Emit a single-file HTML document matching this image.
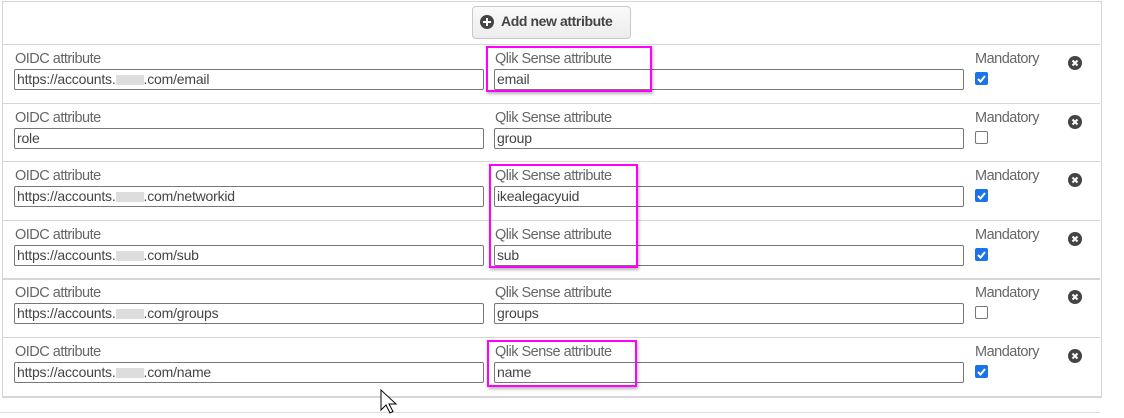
<html><head><style>
body{margin:0;width:1124px;height:418px;background:#fff;position:relative;overflow:hidden;font-family:"Liberation Sans",sans-serif;}
.a{position:absolute}
.lbl{position:absolute;font-size:14.5px;color:#666;letter-spacing:-0.5px}
.inp{position:absolute;height:19px;border:1px solid #777;border-radius:2px;font-size:14px;color:#444;line-height:19px;padding-left:2px;box-sizing:content-box;letter-spacing:-0.2px}
.blur{display:inline-block;width:28px;height:10px;background:#ddd;vertical-align:middle}
.cb{position:absolute;width:11px;height:11px;border:1px solid #777;border-radius:2px}
.cb.on{background:#1a73e8;border-color:#1a73e8}
.x{position:absolute;width:14px;height:14px;border-radius:50%;background:#444}
.mg{position:absolute;border:2px solid #f0f;box-shadow:1px 2px 3px rgba(0,0,0,.3)}
</style></head><body>
<div class="a" style="left:2px;top:1px;width:1098px;height:394px;border:1px solid #d6d6d6;border-bottom:2px solid #d6d6d6"></div>
<div class="a" style="left:0;top:412px;width:1100px;height:1px;background:#ddd"></div>
<div class="a" style="left:472px;top:6px;width:157px;height:31px;border:1px solid #c8c8c8;border-radius:4px;background:linear-gradient(#fafafa,#ececec)">
<div class="a" style="left:7px;top:8px;width:14px;height:14px;border-radius:50%;background:#444"><div class="a" style="left:3px;top:6px;width:8px;height:2px;background:#fff"></div><div class="a" style="left:6px;top:3px;width:2px;height:8px;background:#fff"></div></div>
<div class="a" style="left:28px;top:6px;font-size:14px;font-weight:bold;color:#444;letter-spacing:-0.4px">Add new attribute</div></div>
<div id="rows"></div>
<script>
var tops=[44,103,161,220,278,337];
var o=["https://accounts.<span class=blur></span>.com/email","role","https://accounts.<span class=blur></span>.com/networkid","https://accounts.<span class=blur></span>.com/sub","https://accounts.<span class=blur></span>.com/groups","https://accounts.<span class=blur></span>.com/name"];
var q=["email","group","ikealegacyuid","sub","groups","name"];
var c=[1,0,1,1,0,1];
var h="";
tops.forEach(function(t,i){
h+='<div class="a" style="left:3px;top:'+t+'px;width:1097px;height:'+(i==4?2:1)+'px;background:#d6d6d6"></div>';
h+='<div class="lbl" style="left:15px;top:'+(t+7)+'px">OIDC attribute</div>';
h+='<div class="inp" style="left:14px;top:'+(t+25)+'px;width:466px">'+o[i]+'</div>';
h+='<div class="lbl" style="left:495px;top:'+(t+7)+'px">Qlik Sense attribute</div>';
h+='<div class="inp" style="left:494px;top:'+(t+25)+'px;width:466px">'+q[i]+'</div>';
h+='<div class="lbl" style="left:975px;top:'+(t+7)+'px">Mandatory</div>';
h+='<div class="cb'+(c[i]?' on':'')+'" style="left:975px;top:'+(t+28)+'px">'+(c[i]?'<svg width="11" height="11" style="position:absolute;left:0;top:0"><path d="M2 6l2.5 2.5L9 3" stroke="#fff" stroke-width="2" fill="none"/></svg>':'')+'</div>';
h+='<div class="x" style="left:1068px;top:'+(t+12)+'px"><svg width="14" height="14" style="position:absolute"><path d="M4.5 4.5l5 5M9.5 4.5l-5 5" stroke="#fff" stroke-width="2"/></svg></div>';
});
document.getElementById('rows').innerHTML=h;
</script>
<div class="mg" style="left:486px;top:46px;width:162px;height:42px"></div>
<div class="mg" style="left:489px;top:164px;width:145px;height:100px"></div>
<div class="mg" style="left:487px;top:340px;width:146px;height:43px"></div>
<svg class="a" style="left:380px;top:389px" width="20" height="26"><path d="M1 1v20l5-5 4 8 3-1.5-4-7.5h7z" fill="#fff" stroke="#000"/></svg>
</body></html>
